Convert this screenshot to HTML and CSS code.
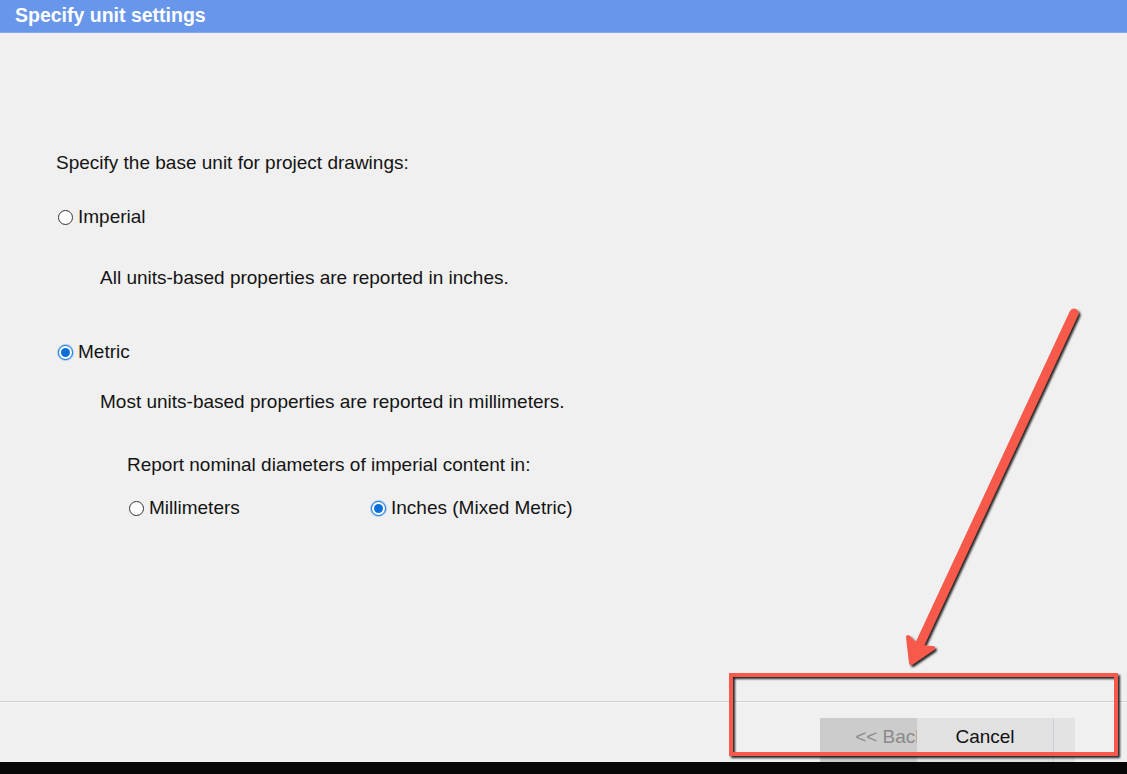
FILE: index.html
```html
<!DOCTYPE html>
<html>
<head>
<meta charset="utf-8">
<link rel="stylesheet" href="styles.css">
</head>
<body>
<div class="page">
  <header class="titlebar">Specify unit settings</header>
  <main class="content">
    <p class="heading">Specify the base unit for project drawings:</p>
    <div class="option opt-imperial"><span class="radio"></span><span>Imperial</span></div>
    <p class="desc desc-imperial">All units-based properties are reported in inches.</p>
    <div class="option opt-metric"><span class="radio checked"></span><span>Metric</span></div>
    <p class="desc desc-metric">Most units-based properties are reported in millimeters.</p>
    <div class="sub">
      <p class="sub-heading">Report nominal diameters of imperial content in:</p>
      <div class="sub-options">
        <div class="option sub-opt"><span class="radio"></span><span>Millimeters</span></div>
        <div class="option sub-opt"><span class="radio checked"></span><span>Inches (Mixed Metric)</span></div>
      </div>
    </div>
  </main>
  <div class="separator"></div>
  <footer class="footer">
    <div class="btn btn-back">&lt;&lt; Back</div>
    <div class="btn btn-cancel">Cancel</div>
    <div class="btn btn-next"></div>
  </footer>
  <div class="bottom-band"></div>

  <svg class="annotation" width="1127" height="774" viewBox="0 0 1127 774">
    <defs>
      <filter id="shadow" x="-10%" y="-10%" width="130%" height="130%">
        <feDropShadow dx="2" dy="2" stdDeviation="1.2" flood-color="#000" flood-opacity="0.85"/>
      </filter>
    </defs>
    <g filter="url(#shadow)">
      <rect x="731" y="675" width="385" height="79" fill="none" stroke="#f75a4b" stroke-width="4"/>
      <line x1="1074" y1="313" x2="917" y2="650" stroke="#f75a4b" stroke-width="9" stroke-linecap="round"/>
      <polygon points="911,663 908,637 918,647 933,648" fill="#f75a4b" stroke="#f75a4b" stroke-width="4" stroke-linejoin="round"/>
    </g>
  </svg>
</div>
</body>
</html>
```
FILE: styles.css
```css
html, body {
  margin: 0;
  padding: 0;
}
body {
  font-family: "Liberation Sans", Arial, sans-serif;
  color: #141414;
  background: #f0f0f0;
}
.page {
  position: relative;
  width: 1127px;
  height: 774px;
  display: flex;
  flex-direction: column;
  overflow: hidden;
  background: #f0f0f0;
}
.titlebar {
  height: 33px;
  flex: none;
  box-sizing: border-box;
  background: #6796ea;
  border-bottom: 1px solid #86aaef;
  color: #ffffff;
  font-weight: bold;
  font-size: 19.5px;
  line-height: 31px;
  padding-left: 15px;
}
.content {
  flex: 1;
  padding-left: 56px;
  font-size: 19px;
  line-height: 22px;
}
.content p {
  margin: 0;
}
.heading {
  margin-top: 119px !important;
}
.option {
  display: flex;
  align-items: center;
  height: 22px;
}
.opt-imperial {
  margin-top: 32px;
}
.desc {
  padding-left: 44px;
}
.desc-imperial {
  margin-top: 39px !important;
}
.opt-metric {
  margin-top: 52px;
}
.desc-metric {
  margin-top: 28px !important;
}
.radio {
  box-sizing: border-box;
  width: 15px;
  height: 15px;
  border-radius: 50%;
  border: 1px solid #333333;
  background: #ffffff;
  margin-left: 2px;
  margin-right: 5px;
  flex: none;
  position: relative;
}
.radio.checked {
  border-color: #0a6fd8;
  box-shadow: 0 0 0 1px #a9cdf3;
}
.radio.checked::after {
  content: "";
  position: absolute;
  left: 2px;
  top: 2px;
  width: 9px;
  height: 9px;
  border-radius: 50%;
  background: #0a6fd8;
}
.sub {
  padding-left: 71px;
  margin-top: 41px;
}
.sub-options {
  display: grid;
  grid-template-columns: 242px auto;
  margin-top: 21px;
}
.sub-opt .radio {
  margin-left: 2px;
}
.separator {
  flex: none;
  height: 1px;
  background: #d0d0d0;
  border-bottom: 1px solid #f8f8f8;
}
.footer {
  flex: none;
  height: 59px;
  box-sizing: border-box;
  padding-top: 15px;
  padding-left: 820px;
  display: flex;
  align-items: flex-start;
  overflow: hidden;
  font-size: 19px;
}
.btn {
  height: 50px;
  box-sizing: border-box;
  text-align: center;
  line-height: 38px;
  flex: none;
}
.btn-back {
  width: 140px;
  background: #cccccc;
  color: #8a8a8a;
}
.btn-cancel {
  width: 137px;
  margin-left: -43px;
  background: #e1e1e1;
  color: #111111;
  border-right: 1px solid #c9d2dc;
  position: relative;
}
.btn-next {
  width: 21px;
  background: #e3e3e3;
}
.bottom-band {
  flex: none;
  height: 12px;
  background: #070707;
}
.annotation {
  position: absolute;
  left: 0;
  top: 0;
  pointer-events: none;
}
```
